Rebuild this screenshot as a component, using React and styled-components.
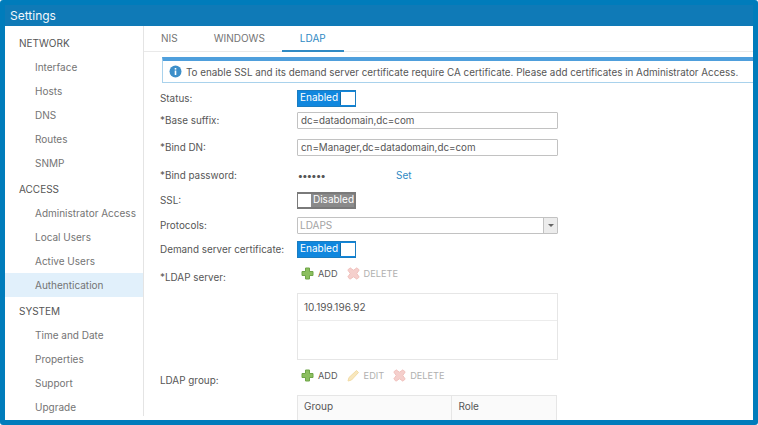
import React from 'react';
import styled, { createGlobalStyle } from 'styled-components';

const Global = createGlobalStyle`
  html, body { margin: 0; padding: 0; background: #fff; }
  body { font-family: Inter, 'Open Sans', 'Liberation Sans', sans-serif; color: #565656; }
`;

const PlusIcon = () => (
  <svg width="13" height="13" viewBox="0 0 13 13">
    <path d="M4.500 1h4v3.500H12v4H8.500V12h-4V8.500H1v-4h3.500z" fill="#8cbf5f" stroke="#6fa548" strokeWidth="1" strokeLinejoin="round" />
  </svg>
);

const CrossIcon = () => (
  <svg width="13" height="13" viewBox="0 0 13 13">
    <path d="M3 .8l3.500 2.400L10 .8 12.200 3 9.800 6.500l2.400 3.500L10 12.200 6.500 9.800 3 12.200.8 10l2.400-3.500L.8 3z" fill="#f5cfcc" stroke="#f0c2be" strokeWidth="1" strokeLinejoin="round" />
  </svg>
);

const PencilIcon = () => (
  <svg width="13" height="13" viewBox="0 0 13 13">
    <path d="M1 12l1-3.500L9.500 1.500l2 2L4.500 11z" fill="#f8e7bd" stroke="#f2dca6" strokeWidth="1" strokeLinejoin="round" />
  </svg>
);

const InfoIcon = () => (
  <svg width="13" height="13" viewBox="0 0 13 13">
    <circle cx="6.500" cy="6.500" r="6" fill="#3d8fc9" />
    <rect x="5.700" y="5.500" width="1.600" height="4.500" fill="#fff" />
    <rect x="5.700" y="3" width="1.600" height="1.600" fill="#fff" />
  </svg>
);

const Frame = styled.div`
  width: 758px;
  height: 425px;
  box-sizing: border-box;
  padding: 5px;
  background: #007cbb;
  border-radius: 3px;
  overflow: hidden;
`;

const Dialog = styled.div`
  display: flex;
  flex-direction: column;
  height: 415px;
  background: #fff;
  overflow: hidden;
`;

const TitleBar = styled.div`
  flex: none;
  height: 21px;
  padding-left: 5px;
  background: #0f7ab7;
  color: #f2f7fb;
  font-size: 12px;
  line-height: 22px;
`;

const Body = styled.div`
  flex: 1;
  min-height: 0;
  display: flex;
`;

const Sidebar = styled.nav`
  flex: none;
  width: 139px;
  height: 390px;
  padding-top: 5px;
  box-sizing: border-box;
  border-right: 1px solid #e4e4e4;
`;

const Section = styled.div`
  & + & { margin-top: 2px; }
`;

const SectionTitle = styled.div`
  height: 24px;
  padding-left: 14px;
  font-size: 10px;
  line-height: 24px;
  color: #565656;
`;

const NavItem = styled.div`
  height: 24px;
  padding-left: 30px;
  font-size: 10px;
  line-height: 24px;
  color: #747474;
  background: ${p => (p.$active ? '#e1f0fb' : 'transparent')};
`;

const Main = styled.main`
  flex: 1;
  min-width: 0;
  display: flex;
  flex-direction: column;
`;

const Tabs = styled.div`
  flex: none;
  height: 26px;
  box-sizing: border-box;
  display: flex;
  border-bottom: 1px solid #e9e9e9;
`;

const Tab = styled.div`
  height: 26px;
  box-sizing: border-box;
  margin-left: ${p => p.$left}px;
  padding: 0 ${p => p.$pad}px;
  font-size: 10px;
  line-height: 24px;
  color: ${p => (p.$active ? '#2f8ac4' : '#747474')};
  border-bottom: 2px solid ${p => (p.$active ? '#2f8ac4' : 'transparent')};
`;

const Banner = styled.div`
  flex: none;
  margin: 5px 0 0 18px;
  height: 26px;
  box-sizing: border-box;
  display: flex;
  align-items: center;
  gap: 4px;
  padding-left: 6px;
  border-top: 4px solid #4f9fdc;
  border-left: 1px solid #a9d2ec;
  border-bottom: 1px solid #a9d2ec;
  font-size: 9.850px;
  color: #565656;
  white-space: nowrap;
`;

const Form = styled.div`
  flex: 1;
  min-height: 0;
  padding: 4px 0 0 16px;
  overflow: hidden;
`;

const Row = styled.div`
  display: flex;
  align-items: ${p => (p.$top ? 'flex-start' : 'center')};
  height: ${p => p.$h}px;
`;

const Label = styled.div`
  flex: none;
  width: 137px;
  font-size: 9.900px;
  color: #565656;
  white-space: nowrap;
  padding-top: ${p => p.$offset || 0}px;
`;

const Toggle = styled.div`
  width: 59px;
  height: 17px;
  box-sizing: border-box;
  display: flex;
  flex-direction: ${p => (p.$on ? 'row' : 'row-reverse')};
  align-items: center;
  justify-content: space-between;
  background: ${p => (p.$on ? '#1087de' : '#8a8a8a')};
  border: ${p => (p.$on ? '1px solid #1a7cc0' : '2px solid #7a7a7a')};
  color: #fff;
  font-size: 10px;
  line-height: 13px;
`;

const ToggleText = styled.span`
  padding: 0 0 2px 2px;
`;

const Knob = styled.span`
  flex: none;
  width: ${p => (p.$on ? 14 : 13)}px;
  height: 13px;
  background: #fff;
  border-left: ${p => (p.$on ? '1px solid #0f6aa8' : 'none')};
`;

const TextInput = styled.div`
  width: 261px;
  height: 17px;
  box-sizing: border-box;
  padding-left: 3px;
  border: 1px solid #c2c2c2;
  border-radius: 1px;
  font-size: 9.800px;
  line-height: 15px;
  color: #565656;
  white-space: nowrap;
`;

const Dots = styled.span`
  width: 99px;
  box-sizing: border-box;
  padding-left: 1px;
  font-size: 10px;
  font-weight: 700;
  letter-spacing: -0.2px;
  color: #565656;
`;

const SetLink = styled.span`
  font-size: 10px;
  color: #2f8ac4;
`;

const Select = styled.div`
  width: 261px;
  height: 17px;
  box-sizing: border-box;
  display: flex;
  align-items: center;
  justify-content: space-between;
  padding-left: 2px;
  border: 1px solid #c2c2c2;
  border-radius: 1px;
  font-size: 10px;
  color: #a3a3a3;
`;

const SelectArrow = styled.span`
  width: 13px;
  height: 15px;
  display: flex;
  align-items: center;
  justify-content: center;
  background: #ececec;
  border-left: 1px solid #c2c2c2;
  &::after {
    content: '';
    border-left: 3px solid transparent;
    border-right: 3px solid transparent;
    border-top: 3px solid #666;
  }
`;

const Actions = styled.div`
  display: flex;
  align-items: center;
  gap: 9px;
  padding: ${p => p.$top}px 0 0 4px;
`;

const Action = styled.span`
  display: inline-flex;
  align-items: center;
  gap: 4px;
  font-size: 9.200px;
  color: ${p => (p.$disabled ? '#b0b0b0' : '#5a5a5a')};
`;

const ListBox = styled.div`
  margin-left: 137px;
  width: 261px;
  height: 67px;
  box-sizing: border-box;
  border: 1px solid #e6e6e6;
`;

const ListRow = styled.div`
  height: 26px;
  padding-left: 6px;
  font-size: 10px;
  line-height: 26px;
  color: #565656;
  border-bottom: 1px solid #ececec;
`;

const Table = styled.div`
  margin-left: 137px;
  width: 260px;
  height: 26px;
  box-sizing: border-box;
  display: flex;
  background: #fafafa;
  border: 1px solid #e6e6e6;
  border-bottom: none;
`;

const HeadCell = styled.div`
  width: ${p => p.$w}px;
  box-sizing: border-box;
  padding-left: 6px;
  font-size: 10px;
  line-height: 21px;
  color: #565656;
  & + & { border-left: 1px solid #e6e6e6; }
`;

const sections = [
  { title: 'NETWORK', items: ['Interface', 'Hosts', 'DNS', 'Routes', 'SNMP'] },
  { title: 'ACCESS', items: ['Administrator Access', 'Local Users', 'Active Users', 'Authentication'] },
  { title: 'SYSTEM', items: ['Time and Date', 'Properties', 'Support', 'Upgrade'] },
];

const App = () => (
  <Frame>
    <Global />
    <Dialog>
      <TitleBar>Settings</TitleBar>
      <Body>
        <Sidebar>
          {sections.map(s => (
            <Section key={s.title}>
              <SectionTitle>{s.title}</SectionTitle>
              {s.items.map(i => (
                <NavItem key={i} $active={i === 'Authentication'}>{i}</NavItem>
              ))}
            </Section>
          ))}
        </Sidebar>
        <Main>
          <Tabs>
            <Tab $left={17} $pad={0}>NIS</Tab>
            <Tab $left={36} $pad={0}>WINDOWS</Tab>
            <Tab $left={17} $pad={18} $active>LDAP</Tab>
          </Tabs>
          <Banner>
            <InfoIcon />
            To enable SSL and its demand server certificate require CA certificate. Please add certificates in Administrator Access.
          </Banner>
          <Form>
            <Row $h={22}>
              <Label>Status:</Label>
              <Toggle $on><ToggleText>Enabled</ToggleText><Knob $on /></Toggle>
            </Row>
            <Row $h={22}>
              <Label>*Base suffix:</Label>
              <TextInput>dc=datadomain,dc=com</TextInput>
            </Row>
            <Row $h={32}>
              <Label>*Bind DN:</Label>
              <TextInput>cn=Manager,dc=datadomain,dc=com</TextInput>
            </Row>
            <Row $h={24}>
              <Label>*Bind password:</Label>
              <Dots>••••••</Dots>
              <SetLink>Set</SetLink>
            </Row>
            <Row $h={26}>
              <Label>SSL:</Label>
              <Toggle><ToggleText>Disabled</ToggleText><Knob /></Toggle>
            </Row>
            <Row $h={24}>
              <Label>Protocols:</Label>
              <Select>LDAPS<SelectArrow /></Select>
            </Row>
            <Row $h={24}>
              <Label>Demand server certificate:</Label>
              <Toggle $on><ToggleText>Enabled</ToggleText><Knob $on /></Toggle>
            </Row>
            <Row $h={32} $top>
              <Label $offset={10}>*LDAP server:</Label>
              <Actions $top={6}>
                <Action><PlusIcon />ADD</Action>
                <Action $disabled><CrossIcon />DELETE</Action>
              </Actions>
            </Row>
            <ListBox>
              <ListRow>10.199.196.92</ListRow>
            </ListBox>
            <Row $h={35} $top>
              <Label $offset={14}>LDAP group:</Label>
              <Actions $top={9}>
                <Action><PlusIcon />ADD</Action>
                <Action $disabled><PencilIcon />EDIT</Action>
                <Action $disabled><CrossIcon />DELETE</Action>
              </Actions>
            </Row>
            <Table>
              <HeadCell $w={154}>Group</HeadCell>
              <HeadCell $w={105}>Role</HeadCell>
            </Table>
          </Form>
        </Main>
      </Body>
    </Dialog>
  </Frame>
);

export default App;
